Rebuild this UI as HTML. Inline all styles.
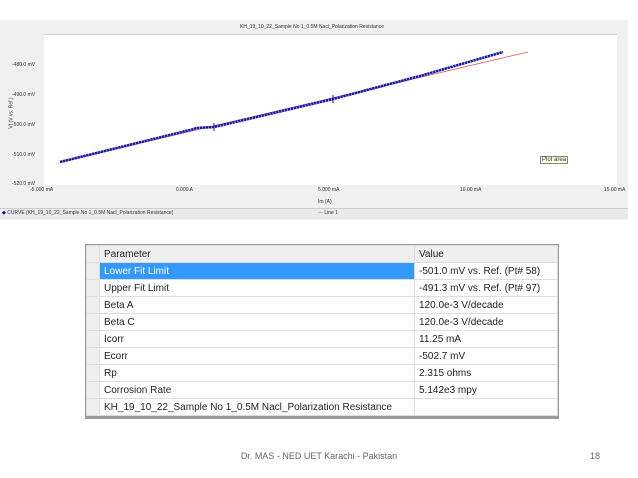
<!DOCTYPE html><html><head><style>
body{margin:0;width:638px;height:478px;background:#fff;position:relative;overflow:hidden;font-family:"Liberation Sans",sans-serif}
.a{position:absolute}
.t{font-size:5px;color:#333}
table{border-collapse:collapse;font-size:10px;color:#222}
td{height:16px;padding:0 0 0 4px;border:1px solid #ddd;white-space:nowrap}
</style></head><body>
<div class="a" style="left:0;top:20px;width:628px;height:200px;background:#f0f0f0"></div>
<div class="a" style="left:44px;top:34px;width:573px;height:150px;background:#fff;border-top:1px solid #ccc"></div>
<div class="a t" style="left:240px;top:24px">KH_19_10_22_Sample No 1_0.5M Nacl_Polarization Resistance</div>
<div class="a t" style="left:12px;top:62px">-480.0 mV</div>
<div class="a t" style="left:12px;top:92px">-490.0 mV</div>
<div class="a t" style="left:12px;top:122px">-500.0 mV</div>
<div class="a t" style="left:12px;top:152px">-510.0 mV</div>
<div class="a t" style="left:12px;top:181px">-520.0 mV</div>
<div class="a t" style="left:-4px;top:110px;transform:rotate(-90deg)">Vf (V vs. Ref.)</div>
<div class="a t" style="left:30px;top:187px">-5.000 mA</div>
<div class="a t" style="left:176px;top:187px">0.000 A</div>
<div class="a t" style="left:318px;top:187px">5.000 mA</div>
<div class="a t" style="left:460px;top:187px">10.00 mA</div>
<div class="a t" style="left:604px;top:187px">15.00 mA</div>
<div class="a t" style="left:318px;top:199px">Im (A)</div>
<div class="a" style="left:0;top:208px;width:628px;height:10px;background:#eaeaea;border-top:1px solid #ccc"></div>
<div class="a t" style="left:2px;top:210px"><span style="color:#00a">◆</span> CURVE (KH_19_10_22_Sample No 1_0.5M Nacl_Polarization Resistance)</div>
<div class="a t" style="left:318px;top:210px"><span style="color:#d55">—</span> Line 1</div>
<div class="a t" style="left:540px;top:156px;background:#ffffe0;border:1px solid #888;padding:0 1px;font-size:6px">Plot area</div>
<svg class="a" style="left:0;top:0" width="638" height="230">
<line x1="60" y1="162" x2="528" y2="52" stroke="#e06060" stroke-width="0.8"/>
<path d="M60 162 L190 130 L197 128 L214 127 L333 99 L420 76 L503 52" stroke="#1a1aa8" stroke-width="2.6" fill="none" stroke-dasharray="2.5 0.5"/>
<path d="M214 123v8M333 95v8" stroke="#1515c0" stroke-width="1"/>
</svg>
<div class="a" style="left:85px;top:244px;border:1px solid #999;border-bottom:3px solid #999">
<table>
<tr style="background:#efefef"><td style="width:8px;background:#eee"></td><td style="width:310px">Parameter</td><td style="width:138px">Value</td></tr>
<tr><td style="background:#eee"></td><td style="background:#3399ff;color:#fff">Lower Fit Limit</td><td>-501.0 mV vs. Ref. (Pt# 58)</td></tr>
<tr><td style="background:#eee"></td><td>Upper Fit Limit</td><td>-491.3 mV vs. Ref. (Pt# 97)</td></tr>
<tr><td style="background:#eee"></td><td>Beta A</td><td>120.0e-3 V/decade</td></tr>
<tr><td style="background:#eee"></td><td>Beta C</td><td>120.0e-3 V/decade</td></tr>
<tr><td style="background:#eee"></td><td>Icorr</td><td>11.25 mA</td></tr>
<tr><td style="background:#eee"></td><td>Ecorr</td><td>-502.7 mV</td></tr>
<tr><td style="background:#eee"></td><td>Rp</td><td>2.315 ohms</td></tr>
<tr><td style="background:#eee"></td><td>Corrosion Rate</td><td>5.142e3 mpy</td></tr>
<tr><td style="background:#eee"></td><td>KH_19_10_22_Sample No 1_0.5M Nacl_Polarization Resistance</td><td></td></tr>
</table></div>
<div class="a" style="left:0;width:638px;top:451px;text-align:center;font-size:9px;color:#666">Dr. MAS - NED UET Karachi - Pakistan</div>
<div class="a" style="left:590px;top:451px;font-size:9px;color:#666">18</div>
</body></html>
